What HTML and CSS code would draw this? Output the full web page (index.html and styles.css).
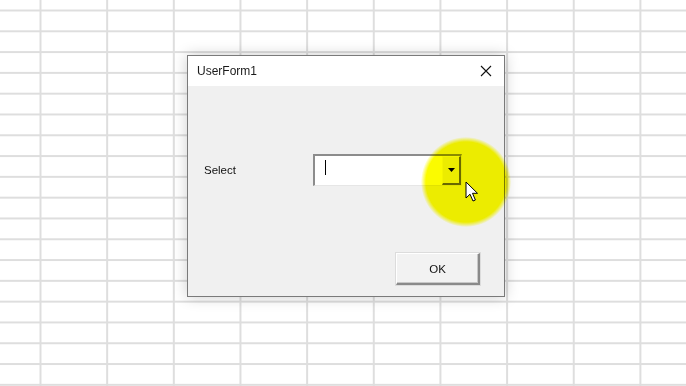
FILE: index.html
```html
<!DOCTYPE html>
<html lang="en">
  <head>
    <meta charset="UTF-8" />
    <meta name="viewport" content="width=device-width, initial-scale=1.0" />
    <title>UserForm1</title>
    <link rel="stylesheet" href="styles.css">
  </head>
  <body>
    <div class="sheet">
      <div class="userform">
        <div class="titlebar">
          <span class="title">UserForm1</span>
          <span class="close">
            <svg width="12" height="12" viewBox="0 0 12 12">
              <path d="M1 1 L11 11 M11 1 L1 11" stroke="#111" stroke-width="1.1" fill="none" />
            </svg>
          </span>
        </div>
        <div class="form-body">
          <div class="field-row">
            <label class="field-label">Select</label>
            <div class="combo">
              <span class="text-caret"></span>
              <div class="drop-btn">
                <svg width="7" height="4" viewBox="0 0 7 4">
                  <path d="M0 0 H7 L3.5 4 Z" fill="#000" />
                </svg>
              </div>
            </div>
          </div>
          <div class="actions">
            <button class="ok-button">OK</button>
          </div>
        </div>
      </div>

      <!-- click highlight + mouse pointer from the recording -->
      <div class="highlight"></div>
      <svg class="pointer" width="14" height="22" viewBox="0 0 14 22">
        <path d="M1 1 L1 17 L5 13.2 L8 20 L10.4 19 L7.5 12.3 L12.5 12.3 Z" fill="#fff" stroke="#000" stroke-width="1" stroke-linejoin="round" />
      </svg>
    </div>
  </body>
</html>
```

FILE: styles.css
```css
* {
  margin: 0;
  padding: 0;
  box-sizing: border-box;
}
body {
  font-family: "Segoe UI", "Liberation Sans", Arial, sans-serif;
  background: #ffffff;
  width: 686px;
  height: 386px;
  overflow: hidden;
}
.sheet {
  position: relative;
  width: 686px;
  height: 386px;
  padding: 55px 0 0 187px;
  background-color: #ffffff;
  background-image:
    linear-gradient(to right, #dedede 0, #dedede 1.5px, transparent 1.5px),
    linear-gradient(to bottom, #dedede 0, #dedede 1.5px, transparent 1.5px);
  background-size: 66.67px 100%, 100% 20.8px;
  background-position: 39.5px 0, 0 9.5px;
}
.userform {
  width: 318px;
  height: 242px;
  border: 1px solid #7a7a7a;
  background: #f0f0f0;
  box-shadow: 0 0 14px rgba(0, 0, 0, 0.2);
  display: flex;
  flex-direction: column;
}
.titlebar {
  height: 30px;
  background: #ffffff;
  display: flex;
  align-items: center;
  justify-content: space-between;
  padding: 0 10px 0 9px;
}
.title {
  font-size: 12px;
  color: #1a1a1a;
}
.close {
  display: flex;
  align-items: center;
  justify-content: center;
  width: 16px;
  height: 16px;
}
.form-body {
  flex: 1;
  display: flex;
  flex-direction: column;
  padding: 68px 24px 0 16px;
}
.field-row {
  display: flex;
  align-items: center;
}
.field-label {
  width: 109px;
  font-size: 11.5px;
  color: #111;
}
.combo {
  position: relative;
  width: 149px;
  height: 32px;
  background: #ffffff;
  border-top: 2px solid #8c8c8c;
  border-left: 2px solid #8c8c8c;
  border-right: 1px solid #e6e6e6;
  border-bottom: 1px solid #e6e6e6;
  display: flex;
  justify-content: space-between;
}
.text-caret {
  width: 1px;
  height: 15px;
  margin: 4px 0 0 10px;
  background: #000;
}
.drop-btn {
  width: 19px;
  background: #f0f0f0;
  border-left: 1px solid #f8f8f8;
  border-top: 1px solid #f8f8f8;
  border-right: 2px solid #6a6a6a;
  border-bottom: 2px solid #6a6a6a;
  display: flex;
  align-items: center;
  justify-content: center;
}
.actions {
  display: flex;
  justify-content: flex-end;
  margin-top: 67px;
}
.ok-button {
  width: 84px;
  height: 32px;
  font-family: inherit;
  font-size: 11.5px;
  color: #111;
  background: #f2f2f2;
  border-top: 1px solid #ffffff;
  border-left: 1px solid #ffffff;
  border-right: 2px solid #8a8a8a;
  border-bottom: 2px solid #8a8a8a;
  box-shadow: inset -1px -1px 0 #c8c8c8, 0 0 0 1px #dcdcdc;
}
.highlight {
  position: absolute;
  left: 421px;
  top: 137px;
  width: 90px;
  height: 90px;
  border-radius: 50%;
  background: radial-gradient(circle, #fbfb00 0, #fbfb00 63%, rgba(251, 251, 0, 0) 71%);
  mix-blend-mode: multiply;
}
.pointer {
  position: absolute;
  left: 465px;
  top: 181px;
}
```
